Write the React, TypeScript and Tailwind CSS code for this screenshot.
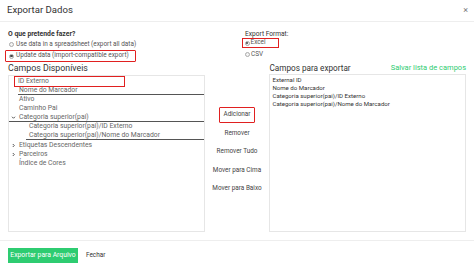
import React from "react";

const Radio = ({ checked }: { checked?: boolean }) => (
  <span className="inline-flex h-[5px] w-[5px] items-center justify-center rounded-full border-[0.5px] border-[#aaa] bg-[#f4f4f4]">
    {checked && <span className="h-[2.5px] w-[2.5px] rounded-full bg-[#444]" />}
  </span>
);

const Chevron = ({ open }: { open?: boolean }) => (
  <svg width="5" height="5" viewBox="0 0 10 10" className="mr-[3px]">
    {open ? (
      <path d="M2 3.5 L5 6.5 L8 3.5" fill="none" stroke="#444" strokeWidth="1.8" />
    ) : (
      <path d="M3.5 2 L6.5 5 L3.5 8" fill="none" stroke="#444" strokeWidth="1.8" />
    )}
  </svg>
);

const moveButtons = ["Remover", "Remover Tudo", "Mover para Cima", "Mover para Baixo"];

const exportFields = [
  "External ID",
  "Nome do Marcador",
  "Categoria superior(pai)/ID Externo",
  "Categoria superior(pai)/Nome do Marcador",
];

export default function App() {
  return (
    <div
      className="relative h-[268px] w-[474px] overflow-hidden bg-white text-[#444]"
      style={{ fontFamily: "Roboto, 'Liberation Sans', sans-serif" }}
    >
      {/* header */}
      <div className="flex h-[22px] items-center justify-between border-b border-[#eeeeee] pl-[7px] pr-[6px]">
        <span className="text-[9.6px] text-[#333]">Exportar Dados</span>
        <span className="text-[9px] leading-none text-[#777]">×</span>
      </div>

      {/* options */}
      <div className="flex pt-[8px]">
        <div className="flex w-[237px] flex-col pl-[8px]">
          <div className="h-[8px] text-[6.8px] font-bold leading-[8px] text-[#333]">O que pretende fazer?</div>
          <div className="mt-[2px] flex h-[9px] items-center gap-[2px] pl-[1px] text-[6.4px] text-[#555]">
            <Radio />
            <span>Use data in a spreadsheet (export all data)</span>
          </div>
          <div className="-ml-[3px] mt-[1px] flex h-[12px] w-[131px] items-center gap-[2px] rounded-[1px] border-[1.5px] border-[#e02020] pl-[3px] text-[6.4px] text-[#555]">
            <Radio checked />
            <span>Update data (import-compatible export)</span>
          </div>
        </div>
        <div className="flex flex-col pl-[8px]">
          <div className="h-[8px] text-[6.6px] leading-[8px] text-[#333]">Export Format:</div>
          <div className="-ml-[3px] flex h-[10px] w-[37px] items-center gap-[1px] border-[1.5px] border-[#e02020] pl-[1.5px] text-[6.4px] text-[#555]">
            <Radio checked />
            <span>Excel</span>
          </div>
          <div className="mt-[2px] flex h-[9px] items-center gap-[1px] text-[6.4px] text-[#555]">
            <Radio />
            <span>CSV</span>
          </div>
        </div>
      </div>

      {/* field lists */}
      <div className="flex px-[8px]">
        <div className="flex w-[197px] flex-col">
          <div className="flex h-[12px] items-center text-[8.8px] leading-none text-[#333]">Campos Disponíveis</div>
          <div className="mt-[1px] h-[157px] border border-[#e6e6e6] text-[6.8px] text-[#666]">
            <div className="ml-[5px] flex h-[11px] w-[111px] items-center border-[1.5px] border-[#e02020] pl-[3px]">ID Externo</div>
            <div className="ml-[9px] flex h-[8px] items-center border-b border-[#555] pl-[1px]">Nome do Marcador</div>
            <div className="flex h-[9px] items-center pl-[10px]">Ativo</div>
            <div className="flex h-[9px] items-center pl-[10px]">Caminho Pai</div>
            <div className="flex h-[9px] items-center border-b border-[#555] pl-[2px]">
              <Chevron open />
              Categoria superior(pai)
            </div>
            <div className="flex h-[9px] items-center pl-[20px]">Categoria superior(pai)/ID Externo</div>
            <div className="ml-[17px] flex h-[9px] items-center border-b border-[#555] pl-[3px]">
              Categoria superior(pai)/Nome do Marcador
            </div>
            <div className="mt-[1px] flex h-[9px] items-center pl-[2px]">
              <Chevron />
              Etiquetas Descendentes
            </div>
            <div className="flex h-[9px] items-center pl-[2px]">
              <Chevron />
              Parceiros
            </div>
            <div className="flex h-[9px] items-center pl-[10px]">Índice de Cores</div>
          </div>
        </div>

        <div className="flex w-[65px] flex-col items-center pt-[45px] text-[6.4px] text-[#444]">
          <div className="flex h-[16px] w-[36px] items-center justify-center rounded-[1px] border-[1.5px] border-[#e02020]">
            Adicionar
          </div>
          {moveButtons.map((b) => (
            <div key={b} className="mt-[2.5px] flex h-[16px] items-center justify-center">
              {b}
            </div>
          ))}
        </div>

        <div className="flex w-[197px] flex-col">
          <div className="flex h-[12px] items-center justify-between leading-none">
            <span className="text-[8.2px] text-[#333]">Campos para exportar</span>
            <span className="text-[7.5px] text-[#2ecc71]">Salvar lista de campos</span>
          </div>
          <div className="h-[158px] border border-[#e6e6e6] px-[2px] text-[6.1px] text-[#333]">
            {exportFields.map((f) => (
              <div key={f} className="flex h-[8.3px] items-center">
                {f}
              </div>
            ))}
          </div>
        </div>
      </div>

      {/* footer */}
      <div className="mt-[8px] flex items-center gap-[8px] border-t border-[#eeeeee] pl-[8px] pt-[7px]">
        <div className="flex h-[15px] w-[70px] items-center justify-center bg-[#2ecc71] text-[6.8px] text-white">
          Exportar para Arquivo
        </div>
        <span className="text-[6.4px] text-[#333]">Fechar</span>
      </div>
    </div>
  );
}
